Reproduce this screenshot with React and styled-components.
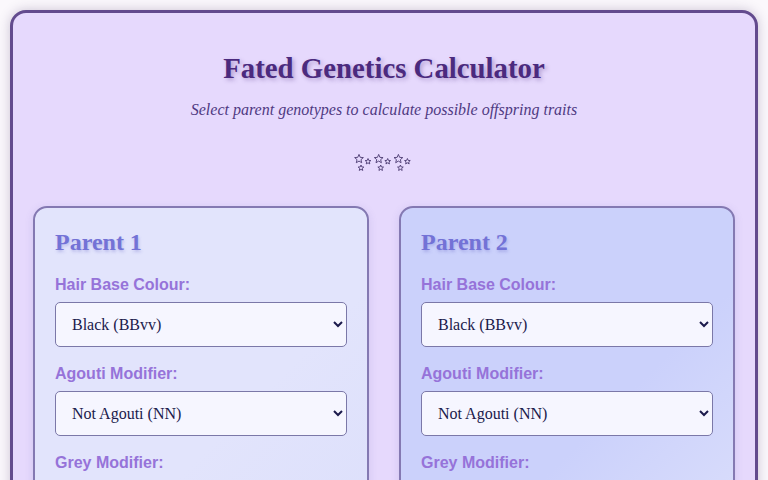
import React, { useState } from 'react';
import styled, { createGlobalStyle } from 'styled-components';

const GlobalStyle = createGlobalStyle`
  body {
    margin: 0;
    padding: 10px;
    background: #fbf8fc;
    font-family: "Liberation Serif", "Times New Roman", serif;
  }
`;

const baseOptions = ['Black (BBvv)', 'Brown (bbvv)', 'Blonde (BBVV)', 'Red (bbVV)'];
const agoutiOptions = ['Not Agouti (NN)', 'Agouti Carrier (Na)', 'Agouti (aa)'];
const greyOptions = ['Not Grey (gg)', 'Grey Carrier (Gg)', 'Grey (GG)'];

// outlined five point star centred on cx, cy
const starPoints = (cx, cy, r) => {
  let pts = [];
  for (let i = 0; i < 10; i++) {
    let rad = i % 2 === 0 ? r : r * 0.45;
    let a = -Math.PI / 2 + (i * Math.PI) / 5;
    pts.push(`${(cx + rad * Math.cos(a)).toFixed(2)},${(cy + rad * Math.sin(a)).toFixed(2)}`);
  }
  return pts.join(' ');
};

const Sparkle = ({ x }) => (
  <g>
    <polygon points={starPoints(x + 5, 6, 4.6)} />
    <polygon points={starPoints(x + 14, 8.5, 3)} />
    <polygon points={starPoints(x + 7, 15, 3)} />
  </g>
);

const ParentCard = ({ title, tint }) => {
  let [base, setBase] = useState(baseOptions[0]);
  let [agouti, setAgouti] = useState(agoutiOptions[0]);
  let [grey, setGrey] = useState(greyOptions[0]);

  return (
    <Card $tint={tint}>
      <CardTitle>{title}</CardTitle>
      <Field>
        <Label>Hair Base Colour:</Label>
        <Select value={base} onChange={e => setBase(e.target.value)}>
          {baseOptions.map(o => <option key={o}>{o}</option>)}
        </Select>
      </Field>
      <Field>
        <Label>Agouti Modifier:</Label>
        <Select value={agouti} onChange={e => setAgouti(e.target.value)}>
          {agoutiOptions.map(o => <option key={o}>{o}</option>)}
        </Select>
      </Field>
      <Field>
        <Label>Grey Modifier:</Label>
        <Select value={grey} onChange={e => setGrey(e.target.value)}>
          {greyOptions.map(o => <option key={o}>{o}</option>)}
        </Select>
      </Field>
    </Card>
  );
};

const App = () => {
  return (
    <>
      <GlobalStyle />
      <Container>
        <Title>Fated Genetics Calculator</Title>
        <Subtitle>Select parent genotypes to calculate possible offspring traits</Subtitle>
        <Sparkles>
          <svg width="60" height="20" viewBox="0 0 60 20">
            <Sparkle x={0} />
            <Sparkle x={19.7} />
            <Sparkle x={39.4} />
          </svg>
        </Sparkles>
        <Parents>
          <ParentCard title="Parent 1" tint="#e2e4fc" />
          <ParentCard title="Parent 2" tint="#cbd1fb" />
        </Parents>
      </Container>
    </>
  );
};

export default App;

const Container = styled.div`
  background-color: #e6d9fd;
  border: 3px solid #634b8e;
  border-radius: 16px;
  padding: 20px;
  box-shadow: 0 0 12px rgba(60, 40, 90, 0.25);
`;

const Title = styled.h1`
  margin: 19px 0 16px;
  text-align: center;
  font-size: 28.8px;
  font-weight: bold;
  color: #4b2a7e;
  text-shadow: 2px 2px 4px rgba(75, 42, 126, 0.35);
`;

const Subtitle = styled.p`
  margin: 0;
  text-align: center;
  font-size: 16px;
  font-style: italic;
  color: #4f3a82;
`;

const Sparkles = styled.div`
  display: flex;
  justify-content: center;
  margin: 34px 0 33px;

  svg {
    display: block;
    fill: none;
    stroke: #4b3a70;
    stroke-width: 0.9;
    stroke-linejoin: round;
  }
`;

const Parents = styled.div`
  display: grid;
  grid-template-columns: 1fr 1fr;
  gap: 30px;
`;

const Card = styled.div`
  background: linear-gradient(135deg, ${p => p.$tint}, ${p => p.$tint} 60%, #dcdffb);
  border: 2px solid #8479b2;
  border-radius: 14px;
  padding: 20px;
  box-shadow: 0 2px 8px rgba(90, 80, 160, 0.15);
`;

const CardTitle = styled.h2`
  margin: 0 0 20px;
  font-size: 24px;
  font-weight: bold;
  line-height: 28px;
  color: #7372d6;
  text-shadow: 1px 2px 3px rgba(100, 100, 200, 0.3);
`;

const Field = styled.div`
  margin-bottom: 18px;
`;

const Label = styled.label`
  display: block;
  margin-bottom: 8px;
  font-family: "Liberation Sans", Arial, sans-serif;
  font-size: 16px;
  font-weight: bold;
  color: #9673d9;
`;

const Select = styled.select`
  display: block;
  width: 100%;
  height: 45px;
  padding: 0 12px;
  font-family: "Liberation Serif", "Times New Roman", serif;
  font-size: 16px;
  color: #1b1a4c;
  background-color: #f6f6ff;
  border: 1px solid #7b78a8;
  border-radius: 5px;
`;
